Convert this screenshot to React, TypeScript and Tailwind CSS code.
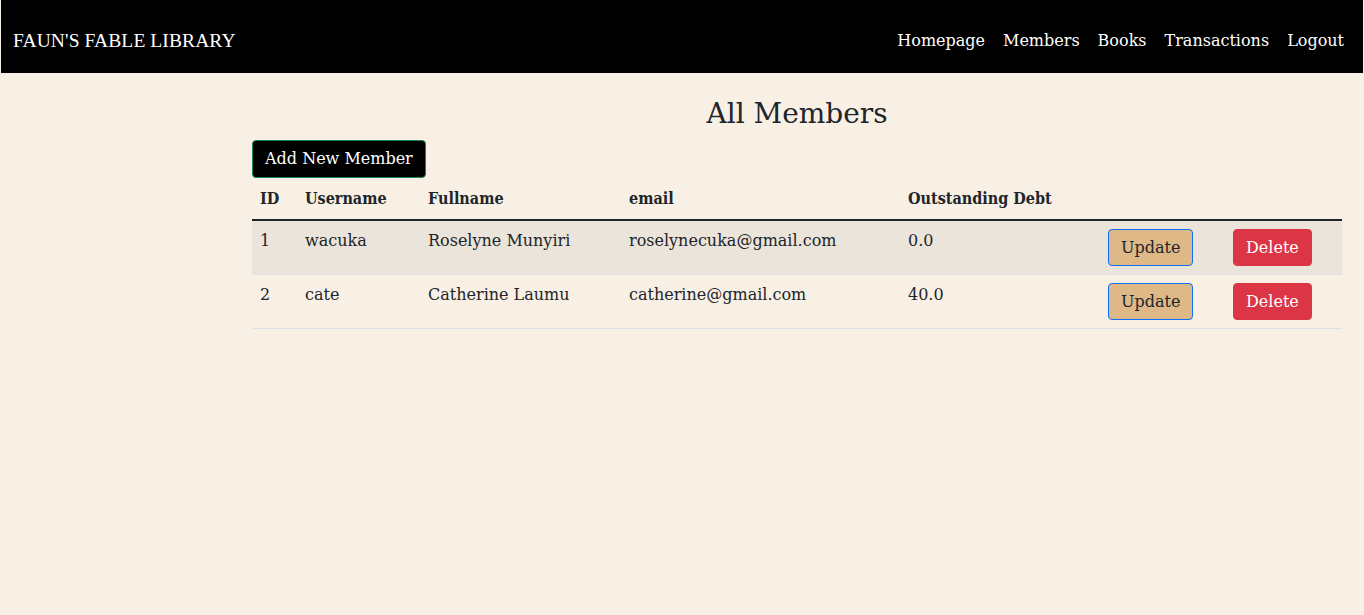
const members = [
  { id: 1, username: 'wacuka', fullname: 'Roselyne Munyiri', email: 'roselynecuka@gmail.com', debt: '0.0' },
  { id: 2, username: 'cate', fullname: 'Catherine Laumu', email: 'catherine@gmail.com', debt: '40.0' },
];

const links = ['Homepage', 'Members', 'Books', 'Transactions', 'Logout'];

export default function App() {
  return (
    <div className="min-h-[615px] bg-[#f8f0e5] text-[#212529] font-['DejaVu_Serif',serif] text-[16px]">
      {/* Navbar */}
      <nav className="h-[73px] ml-px mr-px bg-black flex items-center justify-between pl-3 pr-[10px] pt-[8px]">
        <span className="font-['Liberation_Serif',serif] text-[19.5px] text-white tracking-[0.1px]">
          FAUN'S FABLE LIBRARY
        </span>
        <ul className="flex items-center">
          {links.map(link => (
            <li key={link} className="px-[9px] text-[16px] text-white">
              {link}
            </li>
          ))}
        </ul>
      </nav>

      <div className="ml-[252px] mr-[22px]">
        <h2 className="text-center text-[28px] leading-[38px] pt-[22px] mb-[7px]">All Members</h2>
        <button className="h-[38px] px-3 rounded-[4px] bg-black text-white border border-[#198754] text-[16px] leading-6">
          Add New Member
        </button>

        <table className="w-full border-collapse mt-px">
          <thead>
            <tr className="text-left border-b-2 border-[#212529] font-['DejaVu_Serif_Condensed','DejaVu_Serif',serif]">
              <th className="w-[45px] p-2 font-bold">ID</th>
              <th className="w-[123px] p-2 font-bold">Username</th>
              <th className="w-[201px] p-2 font-bold">Fullname</th>
              <th className="w-[279px] p-2 font-bold">email</th>
              <th className="w-[200px] p-2 font-bold">Outstanding Debt</th>
              <th className="w-[125px] p-2" />
              <th className="p-2" />
            </tr>
          </thead>
          <tbody>
            {members.map((m, i) => (
              <tr key={m.id} className={`border-b border-[#dee2e6] align-top ${i % 2 === 0 ? 'bg-[#ebe4da]' : ''}`}>
                <td className="p-2 leading-6">{m.id}</td>
                <td className="p-2 leading-6">{m.username}</td>
                <td className="p-2 leading-6">{m.fullname}</td>
                <td className="p-2 leading-6">{m.email}</td>
                <td className="p-2 leading-6">{m.debt}</td>
                <td className="p-2">
                  <button className="h-[37px] px-3 rounded-[4px] bg-[#deb887] border border-[#0d6efd] text-[#212529]">
                    Update
                  </button>
                </td>
                <td className="p-2">
                  <button className="h-[37px] px-3 rounded-[4px] bg-[#dc3545] border border-[#dc3545] text-white">
                    Delete
                  </button>
                </td>
              </tr>
            ))}
          </tbody>
        </table>
      </div>
    </div>
  );
}
